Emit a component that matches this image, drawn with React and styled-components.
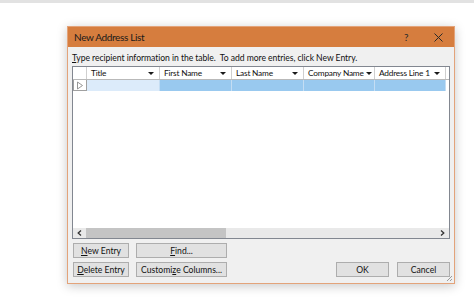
import React from "react";
import styled, { createGlobalStyle } from "styled-components";

const GlobalStyle = createGlobalStyle`
  body {
    margin: 0;
    background: #ffffff;
    font-family: Lato, "Noto Sans", sans-serif;
  }
`;

const Page = styled.div`
  width: 474px;
  height: 301px;
  overflow: hidden;
  background: #ffffff;
`;

const TopBand = styled.div`
  height: 3px;
  background: #e2e2e2;
`;

const Dialog = styled.div`
  margin: 23px 0 0 67px;
  width: 386px;
  height: 256px;
  border: 1px solid #e3a37a;
  background: #f0f0f0;
  box-shadow: 0 2px 10px rgba(0, 0, 0, 0.22);
  display: flex;
  flex-direction: column;
  position: relative;
`;

const TitleBar = styled.div`
  height: 20px;
  background: #d67d3e;
  display: flex;
  align-items: center;
  padding-left: 6px;
  color: #1a1a1a;
  font-size: 10px;
  letter-spacing: -0.35px;
`;

const TitleText = styled.div`
  flex: 1;
`;

const TitleButton = styled.div`
  width: 32px;
  display: flex;
  justify-content: center;
  font-size: 10px;
  color: #2a2a2a;
`;

const Body = styled.div`
  flex: 1;
  display: flex;
  flex-direction: column;
  padding: 5px 4px 6px 4px;
  background: #f0f0f0;
`;

const Hint = styled.div`
  font-size: 8.6px;
  letter-spacing: -0.05px;
  color: #111;
  height: 14px;
  line-height: 12px;
  white-space: nowrap;

  u {
    text-decoration: underline;
  }
`;

const Table = styled.div`
  width: 376px;
  height: 171px;
  border: 1px solid #828790;
  background: #ffffff;
  display: flex;
  flex-direction: column;
`;

const HeaderRow = styled.div`
  display: flex;
  height: 12px;
  border-bottom: 1px solid #b9b9b9;
`;

const Cell = styled.div`
  width: ${(p) => p.w}px;
  flex-shrink: 0;
  box-sizing: border-box;
  border-right: 1px solid #cfcfcf;
`;

const HeadCell = styled(Cell)`
  display: flex;
  align-items: center;
  font-size: 8.3px;
  letter-spacing: -0.2px;
  color: #111;
  padding-left: 4px;
  background: #ffffff;
  white-space: nowrap;
  overflow: hidden;
`;

const HeadLabel = styled.span`
  flex: 1;
`;

const Arrow = styled.span`
  flex-shrink: 0;
  width: 0;
  height: 0;
  border-left: 3px solid transparent;
  border-right: 3px solid transparent;
  border-top: 3.5px solid #1a1a1a;
  margin: 1px 5px 0 2px;
`;

const DataRow = styled.div`
  display: flex;
  height: 11px;
`;

const RowHead = styled(Cell)`
  border: 1px solid #a0a0a0;
  border-top: none;
  display: flex;
  align-items: center;
  justify-content: center;
  background: #ffffff;
`;

const DataCell = styled(Cell)`
  background: ${(p) => (p.active ? "#dcebfa" : "#99c9ef")};
  border-right: 1px solid #c4ddf3;
`;

const Empty = styled.div`
  flex: 1;
  background: #ffffff;
`;

const HScroll = styled.div`
  height: 10px;
  background: #e9e9e9;
  display: flex;
  align-items: center;
`;

const ScrollArrow = styled.div`
  width: 13px;
  display: flex;
  justify-content: center;
`;

const Track = styled.div`
  flex: 1;
  height: 10px;
  display: flex;
`;

const Thumb = styled.div`
  width: 140px;
  background: #c4c4c4;
`;

const Footer = styled.div`
  margin-top: 4px;
  display: flex;
  align-items: flex-end;
`;

const ButtonGrid = styled.div`
  display: grid;
  grid-template-columns: 56px 91px;
  column-gap: 7px;
  row-gap: 4px;
  margin-left: 1px;
`;

const Button = styled.div`
  height: 15px;
  box-sizing: border-box;
  border: 1px solid #adadad;
  background: #e1e1e1;
  font-size: 8.6px;
  color: #111;
  display: flex;
  align-items: center;
  justify-content: center;
  width: ${(p) => (p.w ? `${p.w}px` : "auto")};
  margin-left: ${(p) => p.ml || 0}px;
  white-space: nowrap;

  u {
    text-decoration: underline;
  }
`;

const Spacer = styled.div`
  flex: 1;
`;

const Grip = styled.svg`
  position: absolute;
  right: 1px;
  bottom: 1px;
`;

const columns = [
  { label: "Title", w: 73 },
  { label: "First Name", w: 72 },
  { label: "Last Name", w: 72 },
  { label: "Company Name", w: 71 },
  { label: "Address Line 1", w: 71 },
];

export default function App() {
  return (
    <Page>
      <GlobalStyle />
      <TopBand />
      <Dialog>
        <TitleBar>
          <TitleText>New Address List</TitleText>
          <TitleButton>?</TitleButton>
          <TitleButton>
            <svg width="9" height="9" viewBox="0 0 9 9">
              <path d="M0.5 0.5 L8.5 8.5 M8.5 0.5 L0.5 8.5" stroke="#2a2a2a" strokeWidth="1" />
            </svg>
          </TitleButton>
        </TitleBar>
        <Body>
          <Hint>
            <u>T</u>ype recipient information in the table.&nbsp; To add more entries, click New Entry.
          </Hint>
          <Table>
            <HeaderRow>
              <Cell w={14} />
              {columns.map((c) => (
                <HeadCell key={c.label} w={c.w}>
                  <HeadLabel>{c.label}</HeadLabel>
                  <Arrow />
                </HeadCell>
              ))}
            </HeaderRow>
            <DataRow>
              <RowHead w={14}>
                <svg width="8" height="9" viewBox="0 0 8 9">
                  <path d="M1.5 1 L6.5 4.5 L1.5 8 Z" fill="none" stroke="#8a8a8a" strokeWidth="0.9" />
                </svg>
              </RowHead>
              {columns.map((c, i) => (
                <DataCell key={c.label} w={c.w} active={i === 0} />
              ))}
            </DataRow>
            <Empty />
            <HScroll>
              <ScrollArrow>
                <svg width="5" height="6" viewBox="0 0 5 6">
                  <path d="M4 0.5 L1.2 3 L4 5.5" fill="none" stroke="#333" strokeWidth="1.3" />
                </svg>
              </ScrollArrow>
              <Track>
                <Thumb />
              </Track>
              <ScrollArrow>
                <svg width="5" height="6" viewBox="0 0 5 6">
                  <path d="M1 0.5 L3.8 3 L1 5.5" fill="none" stroke="#333" strokeWidth="1.3" />
                </svg>
              </ScrollArrow>
            </HScroll>
          </Table>
          <Footer>
            <ButtonGrid>
              <Button>
                <u>N</u>ew Entry
              </Button>
              <Button>
                <u>F</u>ind...
              </Button>
              <Button>
                <u>D</u>elete Entry
              </Button>
              <Button>
                Customi<u>z</u>e Columns...
              </Button>
            </ButtonGrid>
            <Spacer />
            <Button w={53}>OK</Button>
            <Button w={53} ml={8}>
              Cancel
            </Button>
          </Footer>
        </Body>
        <Grip width="8" height="8" viewBox="0 0 8 8">
          <path d="M7 2 L2 7 M7 5 L5 7" stroke="#9a9a9a" strokeWidth="1" />
        </Grip>
      </Dialog>
    </Page>
  );
}
